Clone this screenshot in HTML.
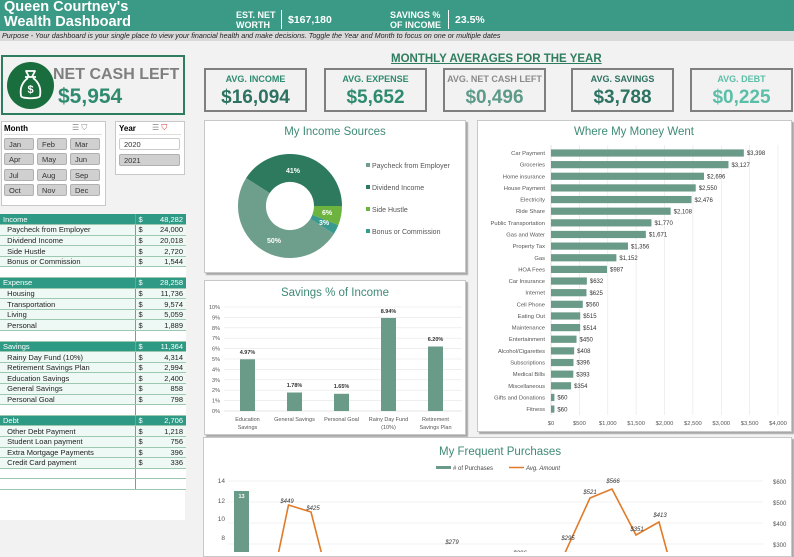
<!DOCTYPE html>
<html><head><meta charset="utf-8"><style>
*{margin:0;padding:0;box-sizing:border-box}
body{width:794px;height:552px;overflow:hidden;background:#f2f2f2;font-family:"Liberation Sans",sans-serif;position:relative}
.a{position:absolute}
.hdr{left:0;top:0;width:794px;height:31px;background:#3a9a86}
.w{color:#fff;font-weight:bold}
.kpi{border:2px solid #7f7f7f;background:#f2f2f2;text-align:center;top:68px;height:44px;width:103px}
.kpi .l{font-size:9px;font-weight:bold;margin-top:4px}
.kpi .v{font-size:19px;font-weight:bold;margin-top:3px}
.panel{background:#fff;border:1px solid #c8c8c8;box-shadow:2px 2px 1px #a8a8a8}
.sl{background:#fff;border:1px solid #c8c8c8}
.btn{position:absolute;width:30px;height:12px;background:#d0d0d0;border:1px solid #b0b0b0;border-radius:2px;font-size:7.5px;color:#333;padding-left:4px;line-height:11px}
table{border-collapse:collapse;font-family:"Liberation Sans",sans-serif;font-size:7.5px;table-layout:fixed}
td{height:10.6px;padding:0 3px;border-bottom:1px solid #9ec7b2;line-height:9px;white-space:nowrap;overflow:hidden}
td.c2{border-left:1px solid #6aa88a}
tr.h td{background:#2e9a85;color:#fff}
tr.i td{background:#eef8f4;color:#222}
tr.b td{background:#fff}
td.r{text-align:right}
</style></head><body>
<div class="a hdr"></div>
<div class="a w" style="left:4px;top:0px;font-size:14.5px;line-height:15px">Queen Courtney's<br>Wealth Dashboard</div>
<div class="a w" style="left:236px;top:10px;font-size:9px;line-height:10px">EST. NET<br>WORTH</div>
<div class="a" style="left:281px;top:10px;width:1px;height:19px;background:#fff"></div>
<div class="a w" style="left:288px;top:14px;font-size:10.5px">$167,180</div>
<div class="a w" style="left:390px;top:10px;font-size:9px;line-height:10px">SAVINGS %<br>OF INCOME</div>
<div class="a" style="left:448px;top:10px;width:1px;height:19px;background:#fff"></div>
<div class="a w" style="left:455px;top:14px;font-size:10.5px">23.5%</div>
<div class="a" style="left:0;top:31px;width:794px;height:10px;background:#d9d9d9"></div>
<div class="a" style="left:2px;top:31px;font-size:7.2px;font-style:italic;color:#222;white-space:nowrap">Purpose - Your dashboard is your single place to view your financial health and make decisions. Toggle the Year and Month to focus on one or multiple dates</div>

<div class="a" style="left:1px;top:55px;width:184px;height:60px;border:2px solid #2e7d5e"></div>
<div class="a" style="left:7px;top:62px;width:47px;height:47px;border-radius:50%;background:#1a6e3e"></div>
<svg class="a" style="left:17px;top:68px" width="27" height="34" viewBox="0 0 27 34"><path d="M9 3 L18 3 L15 9 L12 9 Z M12 9 L15 9 M8 9 L19 9 M11 10 C4 15 3 22 4 28 C5 31 22 31 23 28 C24 22 23 15 16 10" fill="none" stroke="#fff" stroke-width="1.8" stroke-linejoin="round"/><text x="13.5" y="25" fill="#fff" font-size="11" font-weight="bold" text-anchor="middle" font-family="Liberation Sans">$</text></svg>
<div class="a" style="left:53px;top:66px;font-size:16px;font-weight:bold;color:#7f7f7f">NET CASH LEFT</div>
<div class="a" style="left:58px;top:85px;font-size:21px;font-weight:bold;color:#2e8b6e">$5,954</div>

<div class="a" style="left:391px;top:53px;font-size:11.5px;font-weight:bold;color:#2e7d5e;text-decoration:underline">MONTHLY AVERAGES FOR THE YEAR</div>
<div class="a kpi" style="left:204px"><div class="l" style="color:#2e8b70">AVG. INCOME</div><div class="v" style="color:#2e7262">$16,094</div></div>
<div class="a kpi" style="left:324px"><div class="l" style="color:#2e8b70">AVG. EXPENSE</div><div class="v" style="color:#2e8b70">$5,652</div></div>
<div class="a kpi" style="left:443px"><div class="l" style="color:#8a8a8a">AVG. NET CASH LEFT</div><div class="v" style="color:#5e9a88">$0,496</div></div>
<div class="a kpi" style="left:571px"><div class="l" style="color:#2e7262">AVG. SAVINGS</div><div class="v" style="color:#2e7262">$3,788</div></div>
<div class="a kpi" style="left:690px"><div class="l" style="color:#5bbfa8">AVG. DEBT</div><div class="v" style="color:#5bbfa8">$0,225</div></div>

<div class="a sl" style="left:1px;top:121px;width:105px;height:85px"></div>
<div class="a" style="left:4px;top:124px;font-size:8px;font-weight:bold">Month</div>
<div class="a" style="left:4px;top:134px;width:98px;height:1px;background:#ddd"></div>
<div class="a" style="left:72px;top:123px;font-size:8px;color:#888">☰ ⛉</div>
<div class="btn" style="left:4px;top:138px">Jan</div><div class="btn" style="left:37px;top:138px">Feb</div><div class="btn" style="left:70px;top:138px">Mar</div>
<div class="btn" style="left:4px;top:153px">Apr</div><div class="btn" style="left:37px;top:153px">May</div><div class="btn" style="left:70px;top:153px">Jun</div>
<div class="btn" style="left:4px;top:169px">Jul</div><div class="btn" style="left:37px;top:169px">Aug</div><div class="btn" style="left:70px;top:169px">Sep</div>
<div class="btn" style="left:4px;top:184px">Oct</div><div class="btn" style="left:37px;top:184px">Nov</div><div class="btn" style="left:70px;top:184px">Dec</div>
<div class="a sl" style="left:115px;top:121px;width:70px;height:54px"></div>
<div class="a" style="left:119px;top:124px;font-size:8px;font-weight:bold">Year</div>
<div class="a" style="left:119px;top:134px;width:62px;height:1px;background:#ddd"></div>
<div class="a" style="left:152px;top:123px;font-size:8px;color:#888">☰ <span style="color:#c33">⛉</span></div>
<div class="btn" style="left:119px;top:138px;width:61px;background:#fff;border-color:#ccc">2020</div>
<div class="btn" style="left:119px;top:154px;width:61px">2021</div>

<table class="a" style="left:0;top:214px;width:186px">
<colgroup><col style="width:135px"><col style="width:22px"><col style="width:29px"></colgroup>
<tr class="h"><td>Income</td><td class="c2">$</td><td class="r">48,282</td></tr>
<tr class="i"><td>&nbsp;&nbsp;Paycheck from Employer</td><td class="c2">$</td><td class="r">24,000</td></tr>
<tr class="i"><td>&nbsp;&nbsp;Dividend Income</td><td class="c2">$</td><td class="r">20,018</td></tr>
<tr class="i"><td>&nbsp;&nbsp;Side Hustle</td><td class="c2">$</td><td class="r">2,720</td></tr>
<tr class="i"><td>&nbsp;&nbsp;Bonus or Commission</td><td class="c2">$</td><td class="r">1,544</td></tr>
<tr class="b"><td></td><td class="c2"></td><td></td></tr>
<tr class="h"><td>Expense</td><td class="c2">$</td><td class="r">28,258</td></tr>
<tr class="i"><td>&nbsp;&nbsp;Housing</td><td class="c2">$</td><td class="r">11,736</td></tr>
<tr class="i"><td>&nbsp;&nbsp;Transportation</td><td class="c2">$</td><td class="r">9,574</td></tr>
<tr class="i"><td>&nbsp;&nbsp;Living</td><td class="c2">$</td><td class="r">5,059</td></tr>
<tr class="i"><td>&nbsp;&nbsp;Personal</td><td class="c2">$</td><td class="r">1,889</td></tr>
<tr class="b"><td></td><td class="c2"></td><td></td></tr>
<tr class="h"><td>Savings</td><td class="c2">$</td><td class="r">11,364</td></tr>
<tr class="i"><td>&nbsp;&nbsp;Rainy Day Fund (10%)</td><td class="c2">$</td><td class="r">4,314</td></tr>
<tr class="i"><td>&nbsp;&nbsp;Retirement Savings Plan</td><td class="c2">$</td><td class="r">2,994</td></tr>
<tr class="i"><td>&nbsp;&nbsp;Education Savings</td><td class="c2">$</td><td class="r">2,400</td></tr>
<tr class="i"><td>&nbsp;&nbsp;General Savings</td><td class="c2">$</td><td class="r">858</td></tr>
<tr class="i"><td>&nbsp;&nbsp;Personal Goal</td><td class="c2">$</td><td class="r">798</td></tr>
<tr class="b"><td></td><td class="c2"></td><td></td></tr>
<tr class="h"><td>Debt</td><td class="c2">$</td><td class="r">2,706</td></tr>
<tr class="i"><td>&nbsp;&nbsp;Other Debt Payment</td><td class="c2">$</td><td class="r">1,218</td></tr>
<tr class="i"><td>&nbsp;&nbsp;Student Loan payment</td><td class="c2">$</td><td class="r">756</td></tr>
<tr class="i"><td>&nbsp;&nbsp;Extra Mortgage Payments</td><td class="c2">$</td><td class="r">396</td></tr>
<tr class="i"><td>&nbsp;&nbsp;Credit Card payment</td><td class="c2">$</td><td class="r">336</td></tr>
<tr class="b"><td></td><td class="c2"></td><td></td></tr>
<tr class="b"><td></td><td class="c2"></td><td></td></tr>
</table>
<div class="a" style="left:0;top:490px;width:185px;height:30px;background:#fff"></div>

<!-- Income sources -->
<div class="a panel" style="left:204px;top:120px;width:262px;height:153px"></div>
<svg class="a" style="left:204px;top:120px" width="262" height="153" font-family="Liberation Sans">
<text x="131" y="15" font-size="11.5" fill="#3f8a76" text-anchor="middle">My Income Sources</text>
<g transform="translate(86,86)">
<path d="M-43.9,-27.9 A52,52 0 0 1 52,0 L24,0 A24,24 0 0 0 -20.3,-12.9 Z" fill="#2e7a5e"/>
<path d="M52,0 A52,52 0 0 1 48.3,19.1 L22.3,8.8 A24,24 0 0 0 24,0 Z" fill="#6db33f"/>
<path d="M48.3,19.1 A52,52 0 0 1 43.9,27.9 L20.3,12.9 A24,24 0 0 0 22.3,8.8 Z" fill="#3a9a8e"/>
<path d="M43.9,27.9 A52,52 0 0 1 -27.9,43.9 A52,52 0 0 1 -43.9,-27.9 L-20.3,-12.9 A24,24 0 0 0 -12.9,20.3 A24,24 0 0 0 20.3,12.9 Z" fill="#6e9e8c"/>
<text x="3" y="-33" font-size="7" fill="#fff" font-weight="bold" text-anchor="middle">41%</text>
<text x="37" y="9" font-size="7" fill="#fff" font-weight="bold" text-anchor="middle">6%</text>
<text x="34" y="19" font-size="7" fill="#fff" font-weight="bold" text-anchor="middle">3%</text>
<text x="-16" y="37" font-size="7" fill="#fff" font-weight="bold" text-anchor="middle">50%</text>
</g>
<g font-size="7" fill="#555"><rect x="162" y="43" width="4" height="4" fill="#6e9e8c"/><text x="168" y="48">Paycheck from Employer</text>
<rect x="162" y="65" width="4" height="4" fill="#2e7a5e"/><text x="168" y="70">Dividend Income</text>
<rect x="162" y="87" width="4" height="4" fill="#6db33f"/><text x="168" y="92">Side Hustle</text>
<rect x="162" y="109" width="4" height="4" fill="#3a9a8e"/><text x="168" y="114">Bonus or Commission</text></g>
</svg>

<!-- Savings -->
<div class="a panel" style="left:204px;top:280px;width:262px;height:155px"></div>
<svg class="a" style="left:204px;top:280px" width="262" height="155" font-family="Liberation Sans">
<text x="131" y="16" font-size="11.5" fill="#3f8a76" text-anchor="middle">Savings % of Income</text>
<g stroke="#e4e4e4" stroke-width="0.6">
<line x1="20" y1="27" x2="258" y2="27"/><line x1="20" y1="37.4" x2="258" y2="37.4"/><line x1="20" y1="47.8" x2="258" y2="47.8"/><line x1="20" y1="58.2" x2="258" y2="58.2"/><line x1="20" y1="68.6" x2="258" y2="68.6"/><line x1="20" y1="79" x2="258" y2="79"/><line x1="20" y1="89.4" x2="258" y2="89.4"/><line x1="20" y1="99.8" x2="258" y2="99.8"/><line x1="20" y1="110.2" x2="258" y2="110.2"/><line x1="20" y1="120.6" x2="258" y2="120.6"/><line x1="20" y1="131" x2="258" y2="131" stroke="#ccc"/></g>
<g font-size="5.5" fill="#555" text-anchor="end"><text x="16" y="29">10%</text><text x="16" y="39.4">9%</text><text x="16" y="49.8">8%</text><text x="16" y="60.2">7%</text><text x="16" y="70.6">6%</text><text x="16" y="81">5%</text><text x="16" y="91.4">4%</text><text x="16" y="101.8">3%</text><text x="16" y="112.2">2%</text><text x="16" y="122.6">1%</text><text x="16" y="133">0%</text></g>
<g fill="#6a9a88"><rect x="36" y="79.3" width="15" height="51.7"/><rect x="83" y="112.5" width="15" height="18.5"/><rect x="130" y="113.8" width="15" height="17.2"/><rect x="177" y="38" width="15" height="93"/><rect x="224" y="66.5" width="15" height="64.5"/></g>
<g font-size="5.5" fill="#333" font-weight="bold" text-anchor="middle"><text x="43.5" y="74">4.97%</text><text x="90.5" y="107">1.78%</text><text x="137.5" y="108">1.65%</text><text x="184.5" y="33">8.94%</text><text x="231.5" y="61">6.20%</text></g>
<g font-size="5.5" fill="#555" text-anchor="middle"><text x="43.5" y="141">Education</text><text x="43.5" y="149">Savings</text><text x="90.5" y="141">General Savings</text><text x="137.5" y="141">Personal Goal</text><text x="184.5" y="141">Rainy Day Fund</text><text x="184.5" y="149">(10%)</text><text x="231.5" y="141">Retirement</text><text x="231.5" y="149">Savings Plan</text></g>
</svg>

<!-- Money went -->
<div class="a panel" style="left:477px;top:120px;width:315px;height:312px"></div>
<svg class="a" style="left:477px;top:120px" width="315" height="312" font-family="Liberation Sans">
<text x="157" y="15" font-size="11.5" fill="#3f8a76" text-anchor="middle">Where My Money Went</text>
<g stroke="#e4e4e4" stroke-width="0.6"><line x1="74" y1="25" x2="74" y2="295" stroke="#ccc"/><line x1="102.4" y1="25" x2="102.4" y2="295"/><line x1="130.8" y1="25" x2="130.8" y2="295"/><line x1="159.1" y1="25" x2="159.1" y2="295"/><line x1="187.5" y1="25" x2="187.5" y2="295"/><line x1="215.9" y1="25" x2="215.9" y2="295"/><line x1="244.3" y1="25" x2="244.3" y2="295"/><line x1="272.6" y1="25" x2="272.6" y2="295"/><line x1="301" y1="25" x2="301" y2="295"/></g>
<g font-size="5.8" fill="#555" text-anchor="middle"><text x="74" y="305">$0</text><text x="102.4" y="305">$500</text><text x="130.8" y="305">$1,000</text><text x="159.1" y="305">$1,500</text><text x="187.5" y="305">$2,000</text><text x="215.9" y="305">$2,500</text><text x="244.3" y="305">$3,000</text><text x="272.6" y="305">$3,500</text><text x="301" y="305">$4,000</text></g>
<g id="bars"></g>
</svg>
<script>
(function(){var d=[["Car Payment",3398],["Groceries",3127],["Home insurance",2696],["House Payment",2550],["Electricity",2476],["Ride Share",2108],["Public Transportation",1770],["Gas and Water",1671],["Property Tax",1356],["Gas",1152],["HOA Fees",987],["Car Insurance",632],["Internet",625],["Cell Phone",560],["Eating Out",515],["Maintenance",514],["Entertainment",450],["Alcohol/Cigarettes",408],["Subscriptions",396],["Medical Bills",393],["Miscellaneous",354],["Gifts and Donations",60],["Fitness",60]];
var s="";d.forEach(function(r,i){var y=33+i*11.64,w=r[1]*0.05675;var v="$"+r[1].toLocaleString("en-US");
s+='<rect x="74" y="'+(y-3.6)+'" width="'+w+'" height="7.2" fill="#6a9a88"/>';
s+='<text x="68" y="'+(y+2)+'" font-size="5.8" fill="#555" text-anchor="end">'+r[0]+'</text>';
s+='<text x="'+(77+w)+'" y="'+(y+2.2)+'" font-size="6" fill="#333">'+v+'</text>';});
document.getElementById("bars").innerHTML=s;})();
</script>

<!-- Frequent purchases -->
<div class="a panel" style="left:203px;top:437px;width:589px;height:120px"></div>
<svg class="a" style="left:203px;top:437px" width="589" height="115" font-family="Liberation Sans">
<text x="236" y="18" font-size="11.5" fill="#3f8a76">My Frequent Purchases</text>
<rect x="233" y="29" width="15" height="3" fill="#6a9a88"/><text x="250" y="33" font-size="6" fill="#444"># of Purchases</text>
<line x1="306" y1="30.5" x2="321" y2="30.5" stroke="#e07b2a" stroke-width="1.5"/><text x="323" y="33" font-size="6" fill="#444" font-style="italic">Avg. Amount</text>
<g stroke="#e4e4e4" stroke-width="0.6"><line x1="25" y1="44" x2="560" y2="44"/><line x1="25" y1="65" x2="560" y2="65"/><line x1="25" y1="86" x2="560" y2="86"/><line x1="25" y1="107" x2="560" y2="107"/></g>
<g font-size="6.5" fill="#555" text-anchor="end"><text x="22" y="46">14</text><text x="22" y="66">12</text><text x="22" y="84">10</text><text x="22" y="103">8</text></g>
<g font-size="6" fill="#555"><text x="570" y="47">$600</text><text x="570" y="68">$500</text><text x="570" y="89">$400</text><text x="570" y="110">$300</text></g>
<rect x="31" y="54" width="15" height="70" fill="#6a9a88"/><text x="38.5" y="61" font-size="5.5" fill="#fff" font-weight="bold" text-anchor="middle">13</text>
<polyline points="75,118 85.5,68 108,75 119,118" fill="none" stroke="#e07b2a" stroke-width="1.6"/>
<polyline points="361,118 387,61 409,52 433,98 456,85 465,118" fill="none" stroke="#e07b2a" stroke-width="1.6"/>
<g font-size="6" fill="#333" font-style="italic" text-anchor="middle"><text x="84" y="66">$449</text><text x="110" y="73">$425</text><text x="249" y="107">$279</text><text x="317" y="118">$296</text><text x="365" y="103">$295</text><text x="387" y="57">$521</text><text x="410" y="46">$566</text><text x="434" y="94">$351</text><text x="457" y="80">$413</text></g>
</svg>
</body></html>
